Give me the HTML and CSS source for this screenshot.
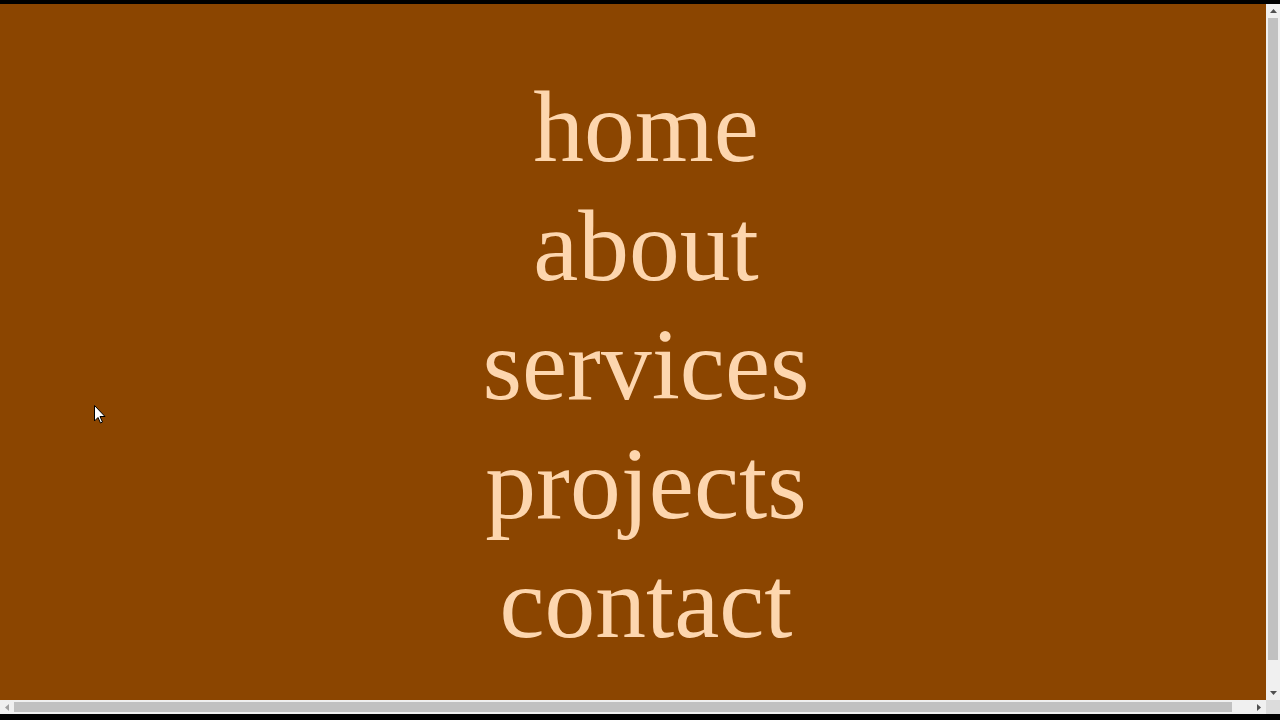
FILE: index.html
```html
<!DOCTYPE html>
<html lang="en">
<head>
<meta charset="utf-8">
<title>Menu</title>
<link rel="stylesheet" href="styles.css">
</head>
<body>
<div class="screen">
  <div class="top-edge"></div>
  <main class="viewport">
    <nav class="menu">
      <ul class="menu-list">
        <li><a href="#home">home</a></li>
        <li><a href="#about">about</a></li>
        <li><a href="#services">services</a></li>
        <li><a href="#projects">projects</a></li>
        <li><a href="#contact">contact</a></li>
      </ul>
    </nav>
    <svg class="cursor" width="12" height="19" viewBox="0 0 12 19"><path d="M0.5 0.5 L0.5 16 L4 12.5 L6.5 18 L8.5 17 L6 11.5 L11 11.5 Z" fill="#fff" stroke="#000" stroke-width="1"/></svg>
  </main>
  <div class="vscroll">
    <div class="arrow arrow-up"><svg width="7" height="4" viewBox="0 0 7 4"><path d="M0 4 L3.5 0 L7 4 Z" fill="#505050"/></svg></div>
    <div class="vtrack"><div class="vthumb"></div></div>
    <div class="arrow arrow-down"><svg width="7" height="4" viewBox="0 0 7 4"><path d="M0 0 L7 0 L3.5 4 Z" fill="#505050"/></svg></div>
  </div>
  <div class="hscroll">
    <div class="arrow arrow-left"><svg width="4" height="7" viewBox="0 0 4 7"><path d="M4 0 L4 7 L0 3.5 Z" fill="#a0a0a0"/></svg></div>
    <div class="htrack"><div class="hthumb"></div></div>
    <div class="arrow arrow-right"><svg width="4" height="7" viewBox="0 0 4 7"><path d="M0 0 L4 3.5 L0 7 Z" fill="#505050"/></svg></div>
  </div>
  <div class="corner"></div>
  <div class="bottom-edge"></div>
</div>
</body>
</html>
```
FILE: styles.css
```css
html, body {
  margin: 0;
  padding: 0;
  background: #000;
  overflow: hidden;
}

.screen {
  width: 1280px;
  height: 720px;
  display: grid;
  grid-template-columns: 1266px 14px;
  grid-template-rows: 4px 696px 14px 6px;
}

.top-edge,
.bottom-edge {
  grid-column: 1 / 3;
  background: #000;
}

.viewport {
  position: relative;
  background: #8b4500;
  overflow: hidden;
}

.menu {
  padding: 64px 0 0 26px;
  text-align: center;
  font-family: "Liberation Serif", "Times New Roman", serif;
  font-size: 101.5px;
  line-height: 119px;
}

.menu-list {
  list-style: none;
  margin: 0;
  padding: 0;
}

.menu-list a {
  color: #fdd6ae;
  text-decoration: none;
}

.cursor {
  position: absolute;
  left: 94px;
  top: 401px;
}

.vscroll {
  display: flex;
  flex-direction: column;
  background: #f0f0f0;
}

.arrow {
  display: flex;
  align-items: center;
  justify-content: center;
  flex: 0 0 14px;
  background: #f0f0f0;
}

.vtrack {
  flex: 1;
  display: flex;
  flex-direction: column;
  padding: 0 2px;
}

.vthumb {
  height: 642px;
  background: #c1c1c1;
}

.hscroll {
  display: flex;
  background: #f0f0f0;
}

.htrack {
  flex: 1;
  display: flex;
  padding: 2px 0;
}

.hthumb {
  width: 1218px;
  background: #c1c1c1;
}

.corner {
  background: #dcdcdc;
}
```
